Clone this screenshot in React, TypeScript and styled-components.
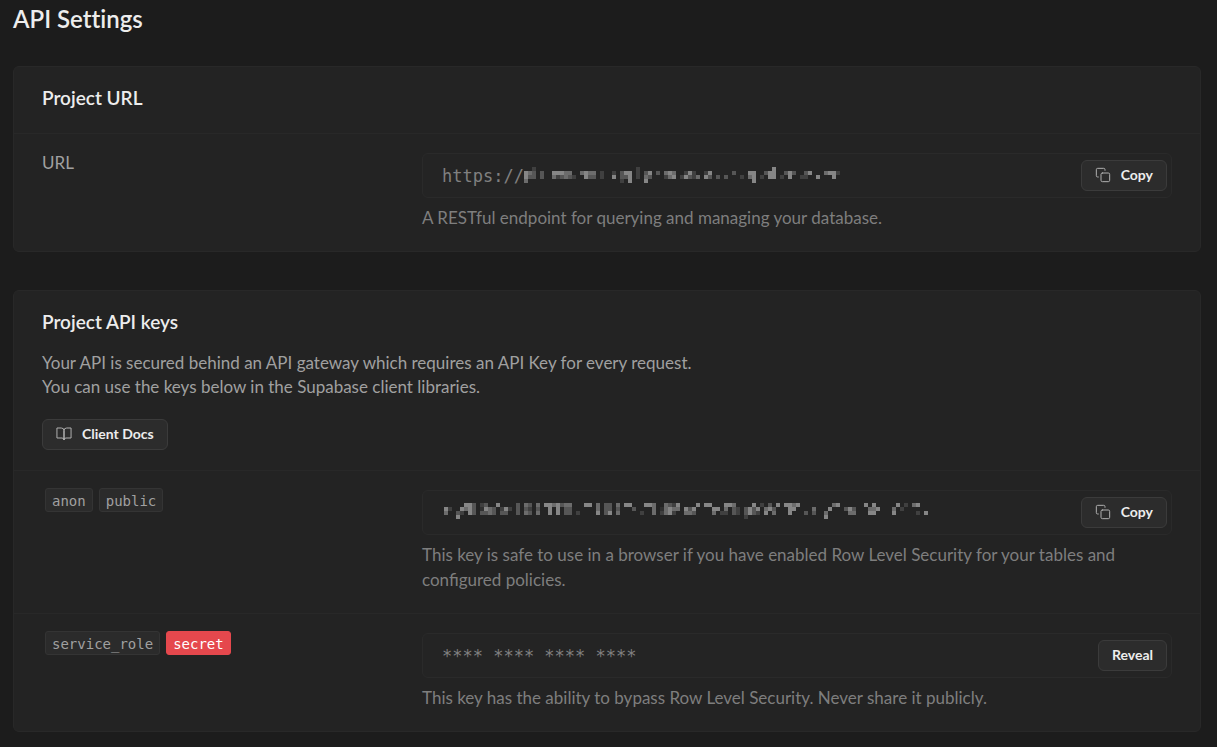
import React, { useId } from 'react';
import styled, { createGlobalStyle } from 'styled-components';
import { FiBookOpen, FiCopy } from 'react-icons/fi';

const GlobalStyle = createGlobalStyle`
  *, *::before, *::after { box-sizing: border-box; }
  body {
    margin: 0;
    min-height: 100vh;
    background: #1c1c1c;
    color: #a0a0a0;
    font-family: Lato, "Liberation Sans", sans-serif;
    font-size: 17px;
    line-height: 24px;
  }
  h1, h2, p { margin: 0; }
`;

const headingFont = 'Lato, "Liberation Sans", sans-serif';
const monoFont = '"DejaVu Sans Mono", "Liberation Mono", monospace';

const Page = styled.main`
  display: flex;
  flex-direction: column;
  gap: 32px;
  padding: 4px 16px 15px 13px;
`;

const PageTitle = styled.h1`
  font: 600 24px/30px ${headingFont};
  font-variant-ligatures: none;
  color: #ededed;
`;

const Cards = styled.div`
  display: flex;
  flex-direction: column;
  gap: 38px;
`;

const Card = styled.section`
  background: #232323;
  border: 1px solid #282828;
  border-radius: 6px;
`;

const CardHeader = styled.header`
  display: flex;
  flex-direction: column;
  align-items: flex-start;
  padding: 18px 28px 20px;
`;

const CardTitle = styled.h2`
  padding-bottom: 2px;
  font: 600 19px/26px ${headingFont};
  color: #ededed;
`;

const CardText = styled.p`
  margin: 14px 0 20px;
`;

const Row = styled.div`
  display: grid;
  grid-template-columns: 1fr 2fr;
  column-gap: 5px;
  padding: 17px 28px 21px;
  border-top: 1px solid #282828;
`;

const RowLabel = styled.label`
  display: flex;
  align-items: flex-start;
  align-self: start;
`;

const Tags = styled(RowLabel)`
  gap: 6px;
  padding-left: 3px;
`;

const Tag = styled.code<{ $danger?: boolean }>`
  padding: 2px 6px 0;
  border: 1px solid ${p => (p.$danger ? '#e5484d' : '#343434')};
  border-radius: 3px;
  background: ${p => (p.$danger ? '#e5484d' : '#2b2b2b')};
  color: ${p => (p.$danger ? '#ffffff' : '#a0a0a0')};
  font: 14px/20px ${monoFont};
  white-space: nowrap;
`;

const Control = styled.div`
  display: flex;
  flex-direction: column;
  gap: 7px;
  padding-top: 2px;
`;

const Field = styled.div`
  position: relative;
  display: flex;
  align-items: center;
  height: 45px;
  padding: 0 4px 0 19px;
  border: 1px solid #2a2a2a;
  border-radius: 6px;
  background: #242424;
`;

const Value = styled.input`
  flex: 1;
  min-width: 0;
  padding: 0;
  border: 0;
  outline: 0;
  background: transparent;
  color: #808080;
  font: 17px/24px ${monoFont};
`;

const Redaction = styled.svg<{ $top: number; $start: number }>`
  position: absolute;
  top: ${p => p.$top}px;
  left: ${p => p.$start}px;
`;

const Hint = styled.p`
  color: #7e7e7e;
  line-height: 25px;
`;

const Button = styled.button`
  display: inline-flex;
  align-items: center;
  gap: 10px;
  height: 31px;
  padding: 0 13px 1px;
  border: 1px solid #3b3b3b;
  border-radius: 6px;
  background: #2c2c2c;
  color: #ededed;
  font: 700 14px/20px ${headingFont};
  cursor: pointer;

  svg {
    color: #b0b0b0;
    stroke-width: 1.5;
  }
`;

const CELL = 4;
const SHADES: Record<string, string> = {
  '1': '#303030', '2': '#404040', '3': '#565656', '4': '#6c6c6c', '5': '#868686',
};

// Each token is "column:shades", one shade per 4px cell from top to bottom.
const URL_CELLS =
  '0:.554 1:.43 2:233 4:.33 7:.54 8:.52 9:.53 10:.44 11:.43 12:..2 14:.4 15:.55 16:.43 17:.43 19:.22 22:.25 24:.332 25:.53 26:.555 28:222 ' +
  '30:.345 31:.53 33:.3 35:.42 36:.54 37:.45 39:..2 40:.25 41:.53 42:.22 43:..4 45:.25 46:.53 48:..3 50:..3 52:.3 54:..2 ' +
  '56:.54 57:.555 59:..2 60:.3 61:.55 62:555 64:..2 65:.3 66:.55 67:.3 69:..2 70:.32 71:.5 73:..5 75:.4 76:.5 77:.55 78:.2';

const KEY_CELLS =
  '0:.54 1:.2 3:..35 4:.52 5:54. 6:555 7:333 9:213 10:353 11:.44 12:.33 13:5 14:.23 15:.53 16:.2 18:333 20:434 21:323 23:434 25:5 26:555 27:4 28:555 29:3 30:433 31:433 ' +
  '33:..2 35:5 36:5 38:445 40:333 41:335 43:434 45:5 46:5 47:.3 49:..2 50:5 51:5 52:444 54:.12 55:444 56:355 57:242 58:54 60:.54 61:.34 62:.53 63:5 65:5 66:5 ' +
  '67:.54 68:.5 69:..2 70:542 71:5 72:433 73:.22 75:.332 76:.55 77:533 78:.52 79:2 80:.45 81:35 82:.34 83:5 85:5 86:555 87:45 88:5 90:..3 92:.43 ' +
  '95:..45 96:.5 97:4 98:5 100:.3 101:.54 102:.34 105:5 106:.45 107:545 108:.5 112:.45 113:5 114:.2 115:2 117:4 118:5.2 120:..5';

function RedactedText({ cells, top, start }: { cells: string; top: number; start: number }) {
  const rects = cells.split(' ').flatMap(token => {
    const [column, shades] = token.split(':');
    return [...shades].flatMap((shade, row) =>
      SHADES[shade]
        ? [<rect key={`${column}-${row}`} x={Number(column) * CELL} y={row * CELL} width={CELL} height={CELL} fill={SHADES[shade]} />]
        : [],
    );
  });
  return (
    <Redaction $top={top} $start={start} width={CELL * 121} height={CELL * 4} shapeRendering="crispEdges" aria-hidden="true">
      {rects}
    </Redaction>
  );
}

interface SettingProps {
  label: React.ReactNode;
  tagged?: boolean;
  value: string;
  redaction?: React.ReactNode;
  action: React.ReactNode;
  hint: string;
}

function Setting({ label, tagged, value, redaction, action, hint }: SettingProps) {
  const id = useId();
  const Label = tagged ? Tags : RowLabel;
  return (
    <Row>
      <Label htmlFor={id}>{label}</Label>
      <Control>
        <Field>
          <Value id={id} type="text" readOnly value={value} />
          {redaction}
          {action}
        </Field>
        <Hint>{hint}</Hint>
      </Control>
    </Row>
  );
}

function CopyButton() {
  return (
    <Button type="button">
      <FiCopy size={16} />
      Copy
    </Button>
  );
}

export default function App() {
  return (
    <>
      <GlobalStyle />
      <Page>
        <PageTitle>API Settings</PageTitle>
        <Cards>
          <Card>
            <CardHeader>
              <CardTitle>Project URL</CardTitle>
            </CardHeader>
            <Setting
              label="URL"
              value="https://"
              redaction={<RedactedText cells={URL_CELLS} top={13} start={101} />}
              action={<CopyButton />}
              hint="A RESTful endpoint for querying and managing your database."
            />
          </Card>
          <Card>
            <CardHeader>
              <CardTitle>Project API keys</CardTitle>
              <CardText>
                Your API is secured behind an API gateway which requires an API Key for every request.
                <br />
                You can use the keys below in the Supabase client libraries.
              </CardText>
              <Button type="button">
                <FiBookOpen size={16} />
                Client Docs
              </Button>
            </CardHeader>
            <Setting
              tagged
              label={<><Tag>anon</Tag><Tag>public</Tag></>}
              value=""
              redaction={<RedactedText cells={KEY_CELLS} top={12} start={21} />}
              action={<CopyButton />}
              hint="This key is safe to use in a browser if you have enabled Row Level Security for your tables and configured policies."
            />
            <Setting
              tagged
              label={<><Tag>service_role</Tag><Tag $danger>secret</Tag></>}
              value="**** **** **** ****"
              action={<Button type="button">Reveal</Button>}
              hint="This key has the ability to bypass Row Level Security. Never share it publicly."
            />
          </Card>
        </Cards>
      </Page>
    </>
  );
}
